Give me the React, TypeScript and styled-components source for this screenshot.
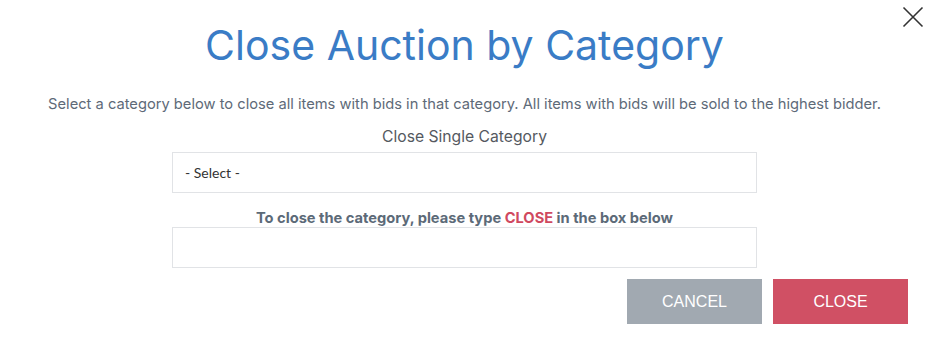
import React from "react";
import styled, { createGlobalStyle } from "styled-components";

const GlobalStyle = createGlobalStyle`
  body {
    margin: 0;
    background: #fff;
    font-family: Inter, "Noto Sans", sans-serif;
  }
`;

const Modal = styled.div`
  position: relative;
  width: 933px;
  height: 347px;
  box-sizing: border-box;
  padding: 19px 25px 0 21px;
  display: flex;
  flex-direction: column;
  align-items: center;
`;

const CloseIcon = styled.button`
  position: absolute;
  top: 5px;
  right: 8px;
  width: 24px;
  height: 24px;
  padding: 0;
  border: none;
  background: none;
  cursor: pointer;
`;

const Title = styled.h1`
  margin: 0;
  font-family: Inter, sans-serif;
  font-weight: 400;
  font-size: 41px;
  line-height: 52px;
  color: #3a7cc6;
`;

const Intro = styled.p`
  margin: 23px 0 0;
  font-size: 14.7px;
  line-height: 20px;
  color: #5e6a78;
  white-space: nowrap;
`;

const Form = styled.div`
  width: 585px;
  display: flex;
  flex-direction: column;
  align-items: stretch;
`;

const SectionLabel = styled.div`
  margin-top: 13px;
  text-align: center;
  font-size: 15.7px;
  line-height: 20px;
  color: #55595f;
`;

const Field = styled.div<{ $top: number }>`
  margin-top: ${(p) => p.$top}px;
  height: 41px;
  box-sizing: border-box;
  border: 1px solid #e1e3e6;
  display: flex;
  align-items: center;
  padding: 0 12px;
  font-family: Lato, sans-serif;
  font-size: 14px;
  color: #333;
`;

const Confirm = styled.div`
  margin-top: 16px;
  text-align: center;
  font-size: 14.67px;
  font-weight: 700;
  line-height: 18px;
  color: #5c6a78;
  white-space: nowrap;
`;

const Danger = styled.span`
  color: #d0495f;
`;

const Actions = styled.div`
  align-self: stretch;
  display: flex;
  justify-content: flex-end;
  gap: 11px;
  margin-top: 11px;
`;

const Button = styled.button<{ $variant: "cancel" | "close" }>`
  width: 135px;
  height: 45px;
  border: none;
  font-family: "Liberation Sans", Arial, sans-serif;
  font-size: 16px;
  color: #fff;
  background: ${(p) => (p.$variant === "close" ? "#d05064" : "#a1a9b1")};
  cursor: pointer;
`;

export default function App() {
  return (
    <>
      <GlobalStyle />
      <Modal>
        <CloseIcon aria-label="Close">
          <svg width="24" height="24" viewBox="0 0 24 24">
            <path d="M2.5 2.5 L21.5 21.5 M21.5 2.5 L2.5 21.5" stroke="#333" strokeWidth="1.6" fill="none" />
          </svg>
        </CloseIcon>
        <Title>Close Auction by Category</Title>
        <Intro>
          Select a category below to close all items with bids in that category. All items with bids will be sold to the highest bidder.
        </Intro>
        <Form>
          <SectionLabel>Close Single Category</SectionLabel>
          <Field $top={5}>- Select -</Field>
          <Confirm>
            To close the category, please type <Danger>CLOSE</Danger> in the box below
          </Confirm>
          <Field $top={0} />
        </Form>
        <Actions>
          <Button $variant="cancel">CANCEL</Button>
          <Button $variant="close">CLOSE</Button>
        </Actions>
      </Modal>
    </>
  );
}
